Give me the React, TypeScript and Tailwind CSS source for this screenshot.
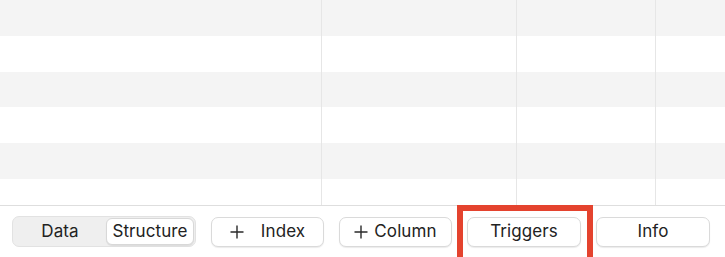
import React from 'react';

const rows = Array.from({ length: 6 });

const Row: React.FC<{ striped: boolean }> = ({ striped }) => (
  <div className={`flex h-[35.8px] shrink-0 ${striped ? 'bg-[#f4f4f4]' : 'bg-white'}`}>
    <div className="w-[322px] shrink-0 border-r border-[#e6e6e6]" />
    <div className="w-[195px] shrink-0 border-r border-[#e6e6e6]" />
    <div className="w-[139px] shrink-0 border-r border-[#e6e6e6]" />
    <div className="flex-1" />
  </div>
);

const PlusIcon = () => (
  <svg width="14" height="14" viewBox="0 0 14 14" fill="none" stroke="#2a2a2a" strokeWidth="1.4">
    <path d="M7 0.5v13M0.5 7h13" />
  </svg>
);

const ToolButton: React.FC<{ children: React.ReactNode; className?: string }> = ({
  children,
  className = '',
}) => (
  <button
    className={`flex h-[30px] items-center justify-center rounded-[7px] border border-[#dadada] bg-white text-[17px] tracking-[0.1px] text-[#222] shadow-[0_1px_1px_rgba(0,0,0,0.08)] ${className}`}
  >
    {children}
  </button>
);

export default function App() {
  return (
    <div
      className="relative h-[257px] w-[725px] overflow-hidden bg-white"
      style={{ fontFamily: 'Inter, "Noto Sans", sans-serif' }}
    >
      {/* Table rows */}
      <div className="flex h-[206px] flex-col overflow-hidden border-b border-[#dedede]">
        {rows.map((_, i) => (
          <Row key={i} striped={i % 2 === 0} />
        ))}
      </div>

      {/* Bottom toolbar */}
      <div className="flex items-center gap-[15px] pl-[12px] pt-[10px]">
        <div className="flex h-[31px] w-[184px] items-center rounded-[7px] border border-[#e2e2e2] bg-[#efefef] p-[1px] text-[17px] tracking-[0.1px] text-[#222]">
          <div className="flex h-full w-[92px] items-center justify-center">Data</div>
          <div className="flex h-full flex-1 items-center justify-center rounded-[6px] border border-[#d8d8d8] bg-white shadow-[0_1px_1px_rgba(0,0,0,0.08)]">
            Structure
          </div>
        </div>
        <ToolButton className="w-[113px] gap-[17px]">
          <PlusIcon />
          <span>Index</span>
        </ToolButton>
        <ToolButton className="w-[113px] gap-[6px]">
          <PlusIcon />
          <span>Column</span>
        </ToolButton>
        <ToolButton className="w-[114px]">Triggers</ToolButton>
        <ToolButton className="w-[114px]">Info</ToolButton>
      </div>

      {/* Highlight annotation */}
      <div className="absolute left-[457px] top-[205px] h-[60px] w-[136px] border-[6px] border-[#e4432e]" />
    </div>
  );
}
